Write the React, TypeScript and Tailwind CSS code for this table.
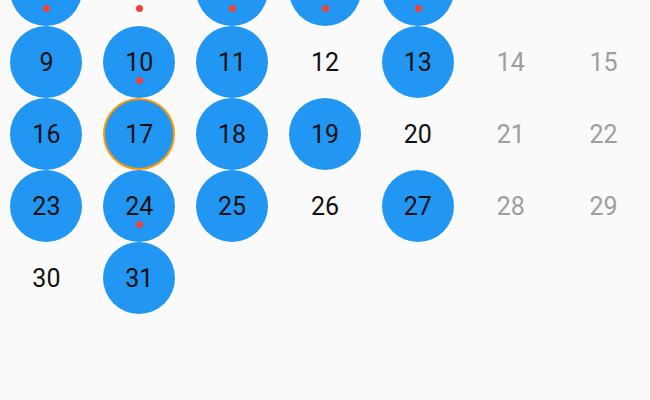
import React from 'react';

type Day = {
  n: number;
  marked?: boolean; // blue circle
  event?: boolean; // red dot
  today?: boolean;
  outside?: boolean; // greyed weekend
};

const weeks: Day[][] = [
  [
    { n: 2, marked: true, event: true },
    { n: 3, event: true },
    { n: 4, marked: true, event: true },
    { n: 5, marked: true, event: true },
    { n: 6, marked: true, event: true },
    { n: 7, outside: true },
    { n: 8, outside: true },
  ],
  [
    { n: 9, marked: true },
    { n: 10, marked: true, event: true },
    { n: 11, marked: true },
    { n: 12 },
    { n: 13, marked: true },
    { n: 14, outside: true },
    { n: 15, outside: true },
  ],
  [
    { n: 16, marked: true },
    { n: 17, marked: true, today: true },
    { n: 18, marked: true },
    { n: 19, marked: true },
    { n: 20 },
    { n: 21, outside: true },
    { n: 22, outside: true },
  ],
  [
    { n: 23, marked: true },
    { n: 24, marked: true, event: true },
    { n: 25, marked: true },
    { n: 26 },
    { n: 27, marked: true },
    { n: 28, outside: true },
    { n: 29, outside: true },
  ],
  [{ n: 30 }, { n: 31, marked: true }],
];

const DayCell: React.FC<{ day: Day }> = ({ day }) => {
  const circle = day.marked
    ? day.today
      ? 'bg-[#2196f3] border-2 border-[#ff9800]'
      : 'bg-[#2196f3]'
    : '';
  const color = day.outside ? 'text-[#9e9e9e]' : 'text-[#111111]';
  return (
    <div className="flex h-[72px] items-center justify-center">
      <div className={`relative flex h-[72px] w-[72px] items-center justify-center rounded-full ${circle}`}>
        <span className={`text-[25px] leading-none ${color}`}>{day.n}</span>
        {day.event && (
          <span className="absolute left-[33px] top-[51px] h-[7px] w-[7px] rounded-full bg-[#f44336]" />
        )}
      </div>
    </div>
  );
};

const App: React.FC = () => {
  return (
    <div
      className="h-[400px] w-[650px] overflow-hidden bg-[#fafafa]"
      style={{ fontFamily: 'Roboto, "Noto Sans", sans-serif' }}
    >
      <div className="-mt-[46px] grid grid-cols-7">
        {weeks.map((week, i) =>
          Array.from({ length: 7 }).map((_, j) => {
            const day = week[j];
            return day ? <DayCell key={`${i}-${j}`} day={day} /> : <div key={`${i}-${j}`} className="h-[72px]" />;
          })
        )}
      </div>
    </div>
  );
};

export default App;
